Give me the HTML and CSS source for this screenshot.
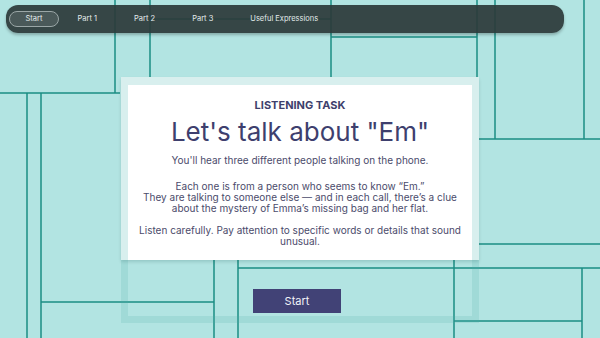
FILE: index.html
```html
<!DOCTYPE html>
<html lang="en">
<head>
    <meta charset="UTF-8">
    <meta name="viewport" content="width=device-width, initial-scale=1.0">
    <title>Listening Task</title>
    <link rel="stylesheet" href="styles.css">
</head>
<body>
    <svg class="lines" width="600" height="338" viewBox="0 0 600 338">
        <g stroke="#1b8d84" stroke-width="1.5" fill="none">
            <path d="M115 0V93 M150 0V77 M331 0V77 M477 0V139 M495 0V139 M584 0V139"/>
            <path d="M27 93V338 M41 93V338 M214 258V338 M238 258V338 M454 258V338 M582 268V338"/>
            <path d="M150 19H331 M331 37H477 M0 93H120 M477 139H600 M477 244H600 M238 268H600 M41 302H214 M454 321H582"/>
        </g>
    </svg>

    <nav class="topbar">
        <a class="tab active" href="#">Start</a>
        <a class="tab" href="#">Part 1</a>
        <a class="tab" href="#">Part 2</a>
        <a class="tab" href="#">Part 3</a>
        <a class="tab" href="#">Useful Expressions</a>
    </nav>

    <main class="stage">
        <div class="frame">
            <section class="card">
                <p class="kicker">LISTENING TASK</p>
                <h1 class="title">Let's talk about "Em"</h1>
                <p class="desc">You'll hear three different people talking on the phone.</p>
                <p class="desc">Each one is from a person who seems to know “Em.”<br>They are talking to someone else — and in each call, there’s a clue about the mystery of Emma’s missing bag and her flat.</p>
                <p class="desc">Listen carefully. Pay attention to specific words or details that sound unusual.</p>
            </section>
            <div class="actions">
                <button class="startbtn">Start</button>
            </div>
        </div>
    </main>
</body>
</html>
```

FILE: styles.css
```css
*{
    padding: 0px;
    margin: 0px;
    box-sizing: border-box;
}
body{
    background-color: #b2e4e2;
    width: 600px;
    height: 338px;
    overflow: hidden;
    position: relative;
    font-family: "Inter", "Liberation Sans", sans-serif;
}
.lines{
    position: absolute;
    left: 0;
    top: 0;
}
.topbar{
    position: relative;
    margin: 5px 0 0 6px;
    width: 558px;
    height: 28px;
    border-radius: 12px;
    background-color: rgba(44, 58, 58, 0.93);
    box-shadow: 0 2px 3px rgba(0, 0, 0, 0.25);
    display: flex;
    align-items: center;
    padding-left: 3px;
}
.tab{
    color: #e4ecec;
    text-decoration: none;
    font-size: 7.5px;
    padding: 0 18.5px;
    height: 16px;
    line-height: 16px;
}
.tab.active{
    width: 50px;
    padding: 0;
    text-align: center;
    border: 1px solid #9aa6a6;
    border-radius: 9px;
    background-color: #4a5959;
    line-height: 14px;
}
.stage{
    position: relative;
    display: flex;
    justify-content: center;
    padding-top: 44px;
}
.frame{
    width: 358px;
    height: 246px;
    border: 7px solid rgba(80, 170, 166, 0.18);
    border-top: none;
    display: flex;
    flex-direction: column;
    align-items: center;
}
.card{
    width: 358px;
    height: 183px;
    margin: 0 -7px;
    background-color: #ffffff;
    border: 7px solid #d8efee;
    border-top-width: 8px;
    border-bottom: none;
    box-shadow: 0 2px 3px rgba(0, 60, 60, 0.16);
    text-align: center;
    color: #4b4b6b;
    padding: 14px 8px 0;
}
.kicker{
    font-size: 11px;
    line-height: 13px;
    font-weight: 700;
    color: #3e3f6c;
}
.title{
    font-size: 26px;
    font-weight: 400;
    color: #3e3f6e;
    line-height: 30px;
    margin: 5px 0 8px;
}
.desc{
    font-size: 10px;
    line-height: 11px;
    margin-bottom: 15px;
}
.desc + .desc{
    margin-bottom: 11px;
}
.actions{
    padding-top: 29px;
    margin-right: 6px;
}
.startbtn{
    display: block;
    width: 88px;
    height: 24px;
    border: none;
    background-color: #414276;
    color: #f2f2f8;
    font-family: "Inter", "Liberation Sans", sans-serif;
    font-size: 11px;
}
```
